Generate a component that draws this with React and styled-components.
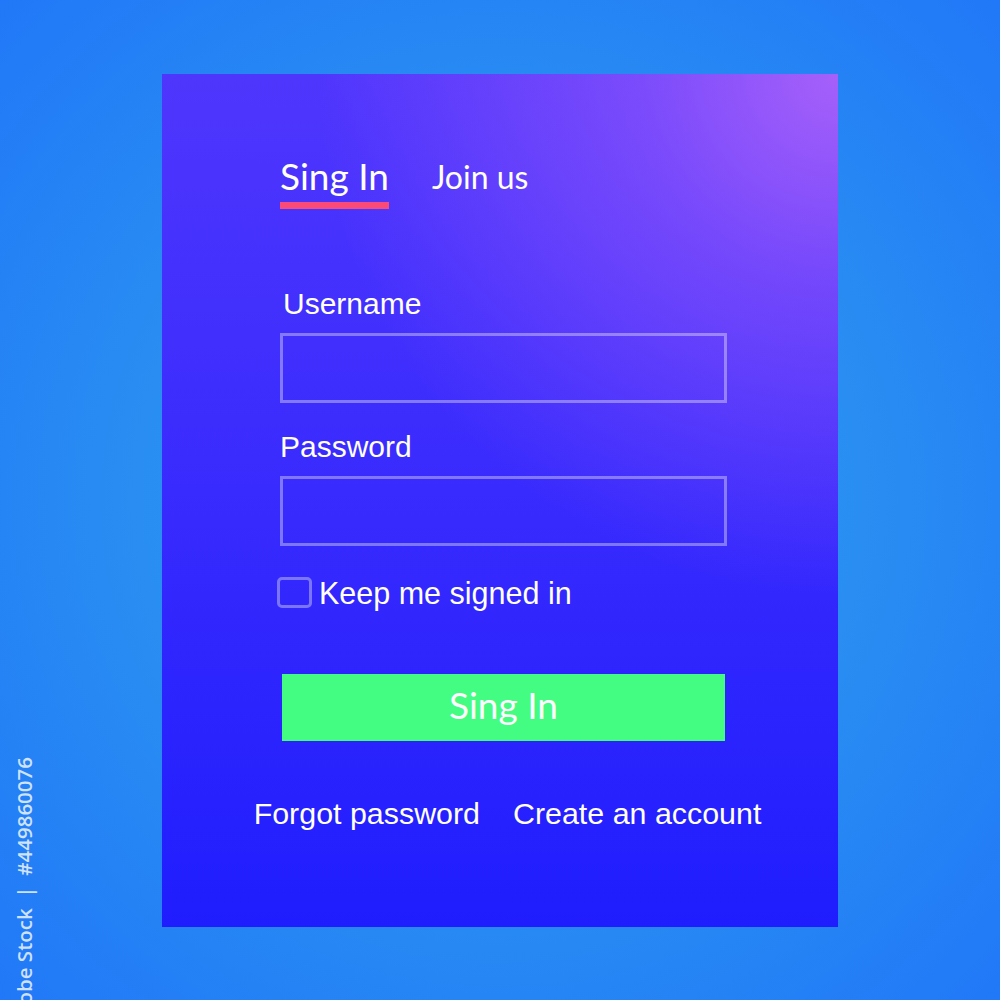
import React from "react";
import styled, { createGlobalStyle } from "styled-components";

const Global = createGlobalStyle`
  html, body { margin: 0; padding: 0; }
  body {
    width: 1000px;
    height: 1000px;
    overflow: hidden;
    font-family: "Liberation Sans", Arial, sans-serif;
  }
  * { box-sizing: border-box; }
`;

const Page = styled.div`
  position: relative;
  width: 1000px;
  height: 1000px;
  display: flex;
  align-items: center;
  justify-content: center;
  background: radial-gradient(ellipse at 50% 50%, #2c9cee 0%, #2a90f1 45%, #2178f8 100%);
  overflow: hidden;
`;

const Card = styled.div`
  width: 676px;
  height: 853px;
  padding: 79px 0 0 118px;
  display: flex;
  flex-direction: column;
  background:
    radial-gradient(circle at 100% 0%, rgba(166, 96, 250, 1) 0px, rgba(166, 96, 250, 0.5) 200px, rgba(166, 96, 250, 0) 520px),
    linear-gradient(to bottom, #4f36fd 0%, #3a2cfd 45%, #1f1dfe 100%);
`;

const Column = styled.div`
  width: 447px;
  display: flex;
  flex-direction: column;
`;

const Tabs = styled.div`
  display: flex;
  align-items: flex-start;
  gap: 43px;
`;

const Tab = styled.div`
  font-family: Lato, "Open Sans", sans-serif;
  font-size: ${(p) => (p.$active ? "37px" : "32px")};
  font-weight: 400;
  line-height: 46px;
  color: #ffffff;
  padding-bottom: 3px;
  padding-top: ${(p) => (p.$active ? "0" : "1px")};
  border-bottom: 7px solid ${(p) => (p.$active ? "#fc4a78" : "transparent")};
`;

const Field = styled.div`
  display: flex;
  flex-direction: column;
  margin-top: ${(p) => p.$mt};
`;

const Label = styled.label`
  font-size: 30px;
  line-height: 34px;
  color: #ffffff;
  margin-bottom: 12px;
  padding-left: ${(p) => p.$indent || "0px"};
`;

const Input = styled.input`
  width: 447px;
  height: 70px;
  border: 3px solid rgba(255, 255, 255, 0.36);
  background: transparent;
  outline: none;
  color: #fff;
  font-size: 24px;
  padding: 0 12px;
`;

const CheckRow = styled.label`
  display: flex;
  align-items: center;
  gap: 7px;
  margin-top: 30px;
  margin-left: -3px;
  height: 34px;
  color: #fff;
  font-size: 30.5px;
  line-height: 34px;
`;

const Box = styled.span`
  width: 35px;
  height: 31px;
  border: 3px solid rgba(255, 255, 255, 0.36);
  border-radius: 5px;
  flex: none;
`;

const Button = styled.button`
  margin-top: 64px;
  margin-left: 2px;
  width: 443px;
  height: 67px;
  border: none;
  background: #43fd82;
  color: #ffffff;
  font-family: Lato, "Open Sans", sans-serif;
  font-size: 37px;
  line-height: 46px;
  display: flex;
  align-items: center;
  justify-content: center;
  padding: 0 0 4px;
  cursor: pointer;
`;

const Links = styled.div`
  margin-top: 55px;
  display: flex;
  justify-content: center;
  gap: 33px;
  padding-left: 8px;
  white-space: nowrap;
`;

const LinkText = styled.a`
  font-size: 30.4px;
  line-height: 34px;
  color: #ffffff;
  text-decoration: none;
`;

const Credit = styled.div`
  position: absolute;
  left: 13px;
  top: 757px;
  writing-mode: vertical-rl;
  transform: rotate(180deg);
  font-family: "Open Sans", sans-serif;
  font-weight: 600;
  font-size: 20.5px;
  line-height: 22px;
  color: rgba(255, 255, 255, 0.78);
  white-space: pre;
`;

export default function App() {
  return (
    <>
      <Global />
      <Page>
        <Card>
          <Column>
            <Tabs>
              <Tab $active>Sing In</Tab>
              <Tab>Join us</Tab>
            </Tabs>
            <Field $mt="77px">
              <Label $indent="3px">Username</Label>
              <Input type="text" />
            </Field>
            <Field $mt="27px">
              <Label>Password</Label>
              <Input type="password" />
            </Field>
            <CheckRow>
              <Box />
              Keep me signed in
            </CheckRow>
            <Button>Sing In</Button>
            <Links>
              <LinkText>Forgot password</LinkText>
              <LinkText>Create an account</LinkText>
            </Links>
          </Column>
        </Card>
        <Credit>{"Adobe Stock  |  #449860076"}</Credit>
      </Page>
    </>
  );
}
